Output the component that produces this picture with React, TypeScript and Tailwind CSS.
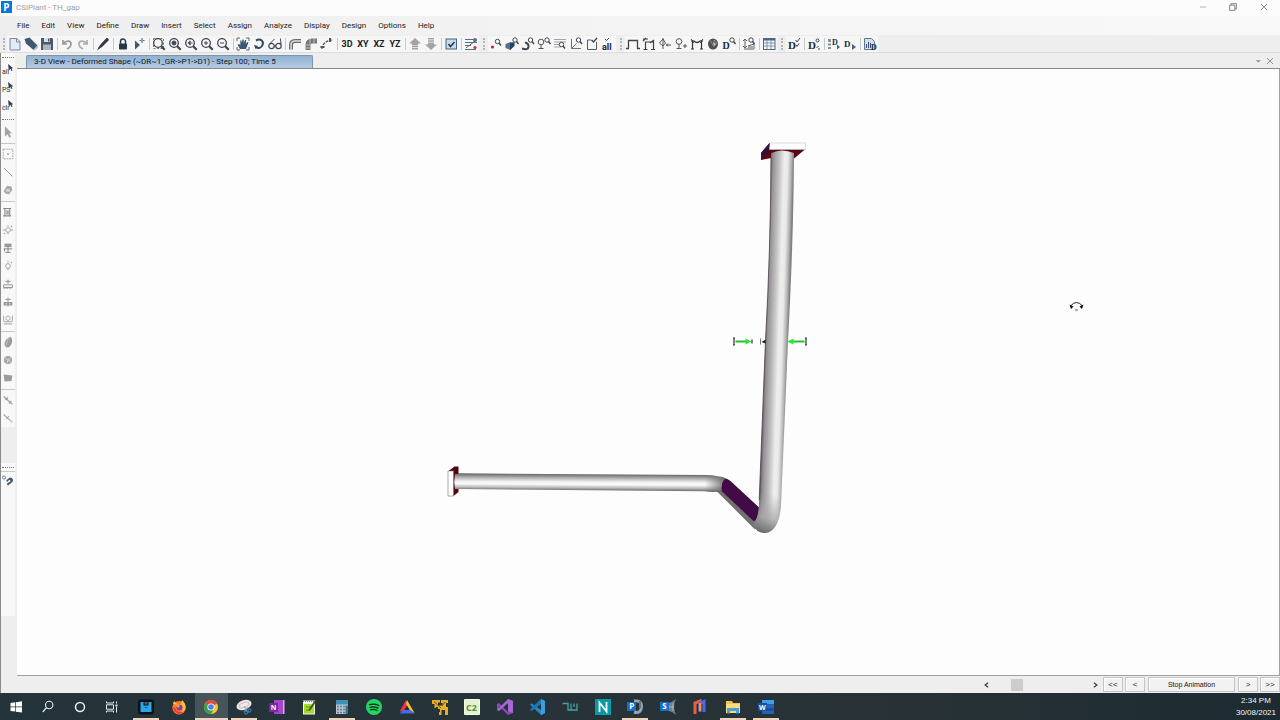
import React from "react";

type Glyph = { label: string; art: React.ReactNode };

const Icon = ({ children, className = "size-4" }: { children: React.ReactNode; className?: string }) => (
  <svg viewBox="0 0 16 16" className={className} fill="none" aria-hidden="true">
    {children}
  </svg>
);

const ink = "#3f4650";
const steel = "#48637f";
const pale = "#9a9a9a";

const Lens = ({ x, y, r = 2.2 }: { x: number; y: number; r?: number }) => (
  <g stroke={ink} strokeWidth="1">
    <circle cx={x} cy={y} r={r} fill="#fff" />
    <path d={`M${x + r * 0.7} ${y + r * 0.7}l2 2.500`} strokeWidth="1.400" />
  </g>
);

const BigLens = ({ children }: { children?: React.ReactNode }) => (
  <g stroke={ink}>
    <circle cx="7" cy="7" r="4.300" strokeWidth="1.300" />
    <path d="M10.200 10.200l3.500 3.500" strokeWidth="2.200" />
    {children}
  </g>
);

const Serif = ({ x, y, s = 11 }: { x: number; y: number; s?: number }) => (
  <text x={x} y={y} fontSize={s} fontWeight="700" fill="#222c36" fontFamily="Liberation Serif, serif">D</text>
);

const g = (label: string, art: React.ReactNode): Glyph => ({ label, art });
const words = (t: string): Glyph => ({
  label: `${t} view`,
  art: <span className="font-[Roboto,sans-serif] text-[9px] leading-4 font-bold text-[#1c1c1c]">{t}</span>,
});

const fileTools: (Glyph | "sep")[] = [
  g("New model", <Icon><path d="M3 2.500h7l3 3v8.500H3z" fill="#e3ebf7" stroke="#7487a3" /><path d="M9.500 2.500v3.500h3.500" stroke="#7487a3" /></Icon>),
  g("Open", <Icon><path d="M1.500 3l5-1.500 8 8-4 4.500-7.500-6.500z" fill="#3e5871" /><path d="M10 14l4.500-4.500.5 2-3.500 3z" fill="#a9bdd0" /></Icon>),
  g("Save", <Icon><path d="M2 2h11l1 1v11H2z" fill="#4c5a68" /><path d="M5 2h6v4H5z" fill="#d6dde5" /><path d="M4 8.500h8V14H4z" fill="#aab6c2" /><path d="M9 2.500h1.500v3H9z" fill="#4c5a68" /></Icon>),
  "sep",
  g("Undo", <Icon><path d="M4 4v4h4M4.500 7.500C7 4 12 4.500 12 8c0 2.500-2 4-4 5" stroke={pale} strokeWidth="1.700" /></Icon>),
  g("Redo", <Icon><path d="M12 4v4H8M11.500 7.500C9 4 4 4.500 4 8c0 2.500 2 4 4 5" stroke="#adadad" strokeWidth="1.700" /></Icon>),
  "sep",
  g("Edit properties", <Icon><path d="M3 13l2-4 6-6.500c1-1 3.500 0 2.500 2L7 11z" fill="#303944" /><path d="M2 14.500l2-4 2 1z" fill="#303944" /></Icon>),
  "sep",
  g("Lock model", <Icon><path d="M5.500 8V5.500a2.500 2.500 0 015 0V8" stroke="#2c3b49" strokeWidth="1.500" /><rect x="4" y="7.500" width="8" height="6" rx="1" fill="#26384a" /></Icon>),
  g("Run analysis", <Icon><path d="M4 4.500v9l5-4.500z" fill="#3e5871" /><path d="M11 2v5M8.500 4.500h5" stroke={steel} /><circle cx="11" cy="4.500" r="1.300" fill="#8fa3b8" /></Icon>),
  "sep",
  g("Zoom window", <Icon><rect x="2.500" y="2.500" width="10" height="10" stroke="#778" strokeDasharray="2 1.500" /><BigLens /></Icon>),
  g("Zoom full", <Icon><BigLens><circle cx="7" cy="7" r="2" fill="#33506c" /></BigLens></Icon>),
  g("Zoom previous", <Icon><BigLens><path d="M9.500 7h-4m2-2l-2 2 2 2" strokeWidth="1.200" /></BigLens></Icon>),
  g("Zoom in", <Icon><BigLens><path d="M7 5v4M5 7h4" /></BigLens></Icon>),
  g("Zoom out", <Icon><BigLens><path d="M5 7h4" /></BigLens></Icon>),
  "sep",
  g("Pan", <Icon><path d="M2 5V2h3M11 2h3v3M14 11v3h-3M5 14H2v-3" stroke="#566" /><path d="M5 13L2.500 8.500 4 8l1.300 1.200V4.500h1.200V7L7.500 3.500h1.200V7L10 4h1.200l-.4 4 1.500-2 1.200.5-2.500 6.500z" fill="#3c5871" /></Icon>),
  g("Rotate view", <Icon><path d="M5 4.500c5-2.500 8 1 6.500 4.500C10.500 12 7 13 5 11" stroke="#34485d" strokeWidth="2" /><path d="M3 9l4 1-2.500 3z" fill="#34485d" /></Icon>),
  g("Perspective", <Icon><circle cx="4.500" cy="10" r="2.700" stroke={ink} strokeWidth="1.200" /><circle cx="11.500" cy="10" r="2.700" stroke={ink} strokeWidth="1.200" /><path d="M7 10h2M2.500 8l5-5M14 8l-.5-5.500" stroke={ink} /></Icon>),
  "sep",
  g("Line pipes", <Icon><path d="M4 13.500V9q0-4 4-4h6" stroke="#6c6c6c" strokeWidth="4" /><path d="M4 14V9q0-4 4-4h6" stroke="#ddd" strokeWidth="1.500" /></Icon>),
  g("Extruded pipes", <Icon><path d="M5 14V9q0-4 4-4h5" stroke="#777" strokeWidth="5" /><path d="M2 9h6M2 12h6M7 3v5M11 2v6" stroke="#c4c4c4" /></Icon>),
  g("Centrelines", <Icon><path d="M3 13q1-8 10-9" stroke="#555" strokeWidth="1.200" strokeDasharray="3 1" /><path d="M1.500 11h4M11 2v4" stroke="#555" strokeWidth="2" /></Icon>),
  "sep",
  words("3D"), words("XY"), words("XZ"), words("YZ"),
  "sep",
  g("Move up", <Icon><path d="M8 2l6 5.500h-3v2H5v-2H2zM5 10h6v1.300H5zM5 12h6v1.500H5z" fill="#a3a3a3" /></Icon>),
  g("Move down", <Icon><path d="M8 14l6-5.500h-3v-2H5v2H2zM5 2h6v1.500H5zM5 4.300h6v1.400H5z" fill="#a3a3a3" /></Icon>),
  "sep",
  g("Display options", <Icon><rect x="3" y="3" width="10.500" height="10" fill="#c8daea" stroke="#46627e" /><path d="M5.500 8l2 2.500L11.500 6" stroke="#233d57" strokeWidth="1.600" /></Icon>),
  "sep",
  g("Show model", <Icon><path d="M2 3.500h12M2 6.500h12M3 12l9-7M2 13.500h11M2 9.500h6" stroke="#566b80" /><circle cx="12" cy="4" r="2" fill="#59728b" /><circle cx="12" cy="11.500" r="1.600" fill="#d22d48" /></Icon>),
];

const selectTools: (Glyph | "sep")[] = [
  g("Find point", <Icon><circle cx="4.500" cy="11" r="1.600" fill="#ce1e38" /><Lens x={9.5} y={5.5} /></Icon>),
  g("Find element", <Icon><path d="M1.500 8l5-2 4 2-4 6-5-2z" fill="#52718f" /><path d="M6 7l4.500-1v4L6 14z" fill="#27435e" /><Lens x={11} y={4} /></Icon>),
  g("Find pipe", <Icon><path d="M2 12.500q6 2 6.500-1.500T5 6.500" stroke={ink} strokeWidth="2" /><Lens x={10.5} y={4} /></Icon>),
  g("Find support", <Icon><circle cx="5" cy="6" r="2.800" stroke="#555" /><path d="M5 9v3M2.500 12.500h5" stroke="#555" /><Lens x={11} y={4} /></Icon>),
  g("Find in list", <Icon><path d="M2 3.500h12M2 6h12M2 8.500h8M2 11h7" stroke="#9aa5b0" /><Lens x={9.5} y={8.5} /></Icon>),
  g("Find direction", <Icon><path d="M3.500 3v9.500H13M3.500 12.500l5-5" stroke="#68727c" /><Lens x={10.5} y={4} /></Icon>),
  g("Select clipboard", <Icon><path d="M7 4H3.500v9.500h9V6" stroke="#555e68" /><path d="M7.500 4l2 2L13 2" stroke={ink} strokeWidth="1.400" /></Icon>),
  g("Select all", <Icon><path d="M5 3l1.500 1.500L9 2" stroke={ink} /><text x="2" y="13.500" fontSize="9" fontWeight="700" fill="#222" fontFamily="Roboto, sans-serif">all</text></Icon>),
];

const assignTools: (Glyph | "sep")[] = [
  g("Frame", <Icon><path d="M1 12.500h3M12 12.500h3M3.500 12.500v-8h9v8" stroke="#444" strokeWidth="1.300" /></Icon>),
  g("Frame loads", <Icon><path d="M2 3h5M4.500 13V6h8M12.500 13V5M10 13.500h4M2.500 13.500h4M2 5l3-3M9 7l4-3" stroke="#3e3e3e" strokeWidth="1.200" /></Icon>),
  g("Anchor", <Icon><path d="M6 2v11M2.500 7L6 3l2.500 4L6 10zM9 9h5M11 7.500L9.500 9l1.500 1.500" stroke="#555" /></Icon>),
  g("Hanger", <Icon><circle cx="6" cy="5.500" r="2.800" stroke="#555" /><path d="M6 8v4M3.500 12.500h5M10 10h4M12 8v4" stroke="#555" /></Icon>),
  g("Deformed shape", <Icon><path d="M3.500 4v9M12.500 4v9M2 5h3q3 3 6 0h3M2 13h3M11 13h3" stroke="#333" strokeWidth="1.200" /><path d="M2 3l3 4M14 3l-3 4" stroke="#444" /></Icon>),
  g("Stress contours", <Icon><ellipse cx="8" cy="8" rx="5" ry="5.500" fill="#505050" /><path d="M5 4l4 7M9 4q5 3 0 6z" stroke="#888" /><path d="M8 6l3 2-2 2z" fill="#c4c4c4" /></Icon>),
  g("Find design", <Icon><Serif x={1.5} y={13} s={10} /><Lens x={11} y={4} /></Icon>),
  "sep",
  g("Find response", <Icon><path d="M4 3v9M2 5l2-2 2 2M2 10l2 2 2-2M7 10l6-2v5H3" stroke="#59626b" /><path d="M7 10h6v4H7z" fill="#a2a9af" /><Lens x={10} y={4} /></Icon>),
  "sep",
  g("Tables", <Icon><rect x="2.500" y="2.500" width="11.500" height="11" fill="#f4f8fc" stroke="#4b6782" /><path d="M2.500 3.500h11.500" stroke="#4b6782" strokeWidth="2" /><path d="M2.500 7h11.500M2.500 10h11.500M6 4v9M10 4v9" stroke="#8097ad" /></Icon>),
];

const designTools: (Glyph | "sep")[] = [
  g("Run design", <Icon><Serif x={2} y={13} /><path d="M9.500 4l1.500 2 3-4M10 9l1 1.500 2-3" stroke={ink} /></Icon>),
  "sep",
  g("Design settings", <Icon><Serif x={2} y={13} /><circle cx="11.500" cy="4.500" r="1.500" stroke={ink} /><path d="M10.500 12l2-2M12 13h2" stroke={ink} /></Icon>),
  "sep",
  g("Run design set", <Icon><path d="M2 3h3v3H2zM2 7.500h3v2H2zM2 11h3v2H2z" fill="#8494a4" /><Serif x={6} y={9} s={8} /><path d="M11 8.500v5l3-2.500z" fill={steel} /></Icon>),
  g("Start design", <Icon><Serif x={2} y={11} s={9} /><path d="M10 8v6l4-3z" fill={steel} /></Icon>),
  "sep",
  g("Design report", <Icon><path d="M2.500 2.500h7l3 3v8h-10z" fill="#d3deea" stroke="#5f7890" /><path d="M4.500 12V8M6.500 12V6M8.500 12V7" stroke="#34506b" /><Serif x={9} y={14} s={8} /></Icon>),
];

const Dot = ({ x, y }: { x: number; y: number }) => <circle cx={x} cy={y} r="0.9" fill={pale} />;
const pick = (t: string) => (
  <Icon>
    <path d="M8 1l6 5-2 .3 1.200 2.200-1.200.7-1.300-2.500L9 8.500z" fill="#333d48" />
    <text x="1" y="13" fontSize="8" fill="#333" fontFamily="Roboto, sans-serif">{t}</text>
  </Icon>
);
const spring = (extra: React.ReactNode) => (
  <Icon><circle cx="8" cy="8" r="2.700" stroke={pale} /><path d="M8 2v3M8 11v3" stroke={pale} strokeDasharray="2 1" />{extra}</Icon>
);

const pickTools: Glyph[] = [g("Select all objects", pick("all")), g("Previous selection", pick("PS")), g("Clear selection", pick("clr"))];

const drawGroups: Glyph[][] = [
  [g("Pointer", <Icon><path d="M4.500 1.500l8 8H9.500l2 4-2 1-2-4-3 2.500z" fill="#a3a3a3" /></Icon>)],
  [
    g("Draw point", <Icon><rect x="2.500" y="2.500" width="11" height="11" stroke={pale} strokeDasharray="2 1" /><circle cx="8" cy="8" r="1" fill="#888" /></Icon>),
    g("Draw line", <Icon><path d="M3.500 3.500l9.500 9.500" stroke="#888" /></Icon>),
    g("Draw bend", <Icon><path d="M3 9l4-6 5 1 1 4-4 5-4-1z" fill="#aaa" /><path d="M6 7h4v3H6z" fill="#d5d5d5" /></Icon>),
  ],
  [
    g("Draw anchor", <Icon><path d="M2.500 4h9M4.500 4v8M10 4v8M2.500 12.500h9" stroke="#888" strokeWidth="1.300" /><path d="M6 6h3v5H6z" fill="#aaa" /></Icon>),
    g("Draw restraint", spring(<><path d="M2 8h3M11 8h3" stroke={pale} /><Dot x={12} y={4} /><Dot x={4} y={12} /></>)),
    g("Draw guide", <Icon><path d="M4 3h8v4H4z" fill="#999" /><path d="M3 9h10M8 7v6M5 13h6M4 9v3" stroke="#777" /></Icon>),
    g("Draw spring", spring(<Dot x={12} y={4} />)),
    g("Draw rest", <Icon><path d="M8 3v5M5 5h6M3 9h10v3H3z" stroke="#888" /><path d="M3 13h10" stroke="#888" strokeDasharray="1 1" /></Icon>),
    g("Draw hanger", <Icon><path d="M8 3v10M5 5h6" stroke="#888" /><path d="M3 8h10v4H3z" fill="#999" /><path d="M6 9v2M10 9v2" stroke="#eee" /></Icon>),
    g("Draw snubber", <Icon><path d="M3 3v6M13 3v6M3 12.500h10M3 10h10" stroke="#999" /><circle cx="8" cy="6" r="2.500" stroke="#aaa" /></Icon>),
  ],
  [
    g("Draw valve", <Icon><path d="M11 2q3 3 1 8t-6 4q-3-2-1.500-6T11 2z" fill="#9c9c9c" /><path d="M9 4q-3 4-3 8" stroke="#c8c8c8" /></Icon>),
    g("Draw flange", <Icon><circle cx="8" cy="8" r="4.700" fill="#a5a5a5" /><path d="M5 6l3 2 3-3M7 11l1-3 3 2" stroke="#ddd" /></Icon>),
    g("Draw reducer", <Icon><path d="M3 4l10 1-1 6.500-8 .5z" fill="#9c9c9c" /></Icon>),
  ],
  [
    g("Draw tie", <Icon><path d="M3 4l10 9M5 8l3-3M9 12l3-3" stroke="#999" strokeWidth="1.300" /></Icon>),
    g("Draw link", <Icon><path d="M3 4l10 9M6 9l3-3" stroke="#aaa" strokeWidth="1.300" /></Icon>),
  ],
];

const Bar = ({ items, name }: { items: (Glyph | "sep")[]; name: string }) => (
  <div role="toolbar" aria-label={name} className="flex items-center bg-[#f6f6f6]">
    {items.map((it, i) =>
      it === "sep" ? (
        <span key={i} className="flex w-1 justify-center"><span className="h-3 w-px bg-[#c9c9c9]" /></span>
      ) : (
        <button key={i} type="button" aria-label={it.label} className="flex size-4 items-center justify-center hover:bg-[#d9e6f3]">
          {it.art}
        </button>
      )
    )}
  </div>
);

const Grip = () => (
  <span className="flex w-[9px] justify-center"><span className="h-3 border-l-2 border-dotted border-[#b5b5b5]" /></span>
);
const SideGrip = () => <div className="flex h-2 items-center"><div className="ml-px w-3 border-t border-dotted border-[#777]" /></div>;

const SideButton = ({ label, art }: Glyph) => (
  <button type="button" aria-label={label} className="flex h-[18px] w-[14px] items-center justify-center hover:bg-[#d9e6f3]">{art}</button>
);

const menus = ["File", "Edit", "View", "Define", "Draw", "Insert", "Select", "Assign", "Analyze", "Display", "Design", "Options", "Help"];

const Sans = ({ t, x, y, s, fill = "#fff" }: { t: string; x: number; y: number; s: number; fill?: string }) => (
  <text x={x} y={y} fontSize={s} fontWeight="700" fill={fill} fontFamily="Open Sans, sans-serif">{t}</text>
);

const systemTasks: Glyph[] = [
  g("Start", <Icon><path d="M2.500 4L7.300 3.300v4.300H2.500zM8 3.200l6-.9v5.300H8zM2.500 8.300h4.800v4.300L2.500 12zM8 8.300h6v5.300l-6-.9z" fill="#fff" /></Icon>),
  g("Search", <Icon><circle cx="9.200" cy="6" r="3.700" stroke="#e8ecee" strokeWidth="1.100" /><path d="M6.500 8.700L2.800 13" stroke="#e8ecee" strokeWidth="1.200" /></Icon>),
  g("Cortana", <Icon><circle cx="8" cy="8" r="4.500" stroke="#e8ecee" strokeWidth="1.500" /></Icon>),
  g("Task view", <Icon><path d="M2.500 2.500v1.500h7V2.500M2.500 13.500V12h7v1.500M2.500 5.800h7v4.400h-7zM12.500 2.500v2M12.500 8v5.500" stroke="#e8ecee" /><path d="M11.500 5.500h2v2h-2z" fill="#e8ecee" /></Icon>),
];

type Task = Glyph & { open?: boolean; active?: boolean };
const apps: Task[] = [
  { ...g("Package manager", <Icon><rect x="0" y="0.500" width="16" height="15" rx="3" fill="#0b1117" /><path d="M2.500 3h3v3.500h5V3h3v10h-11z" fill="#2aa7e8" /><path d="M6.500 3h3v2.500h-3z" fill="#4a6272" /><path d="M6.500 8h3l-1.500 1.500z" fill="#0b4c70" /></Icon>), open: true },
  g("Firefox", <Icon><circle cx="8" cy="8.700" r="6.700" fill="#ff7a26" /><path d="M2 5l1-3 3 3h4l1-4c5 4 5 11-1 13 3-4 2-8-2-8z" fill="#ffc53a" /><path d="M2 8c1 8 9 8 11 4-3 2-7 2-9-3z" fill="#ec3154" /><circle cx="8.500" cy="8.500" r="3" fill="#8a3cae" /><path d="M4 5q3 0 5 2L7 9z" fill="#ff9b26" /></Icon>),
  { ...g("Chrome", <Icon><circle cx="8" cy="8" r="7" fill="#f9c72b" /><path d="M8 8L1.900 4.500A7 7 0 0114.100 4.500z" fill="#e04b3d" /><path d="M8 8L1.900 4.500A7 7 0 008 15l3-5.300z" fill="#34a251" /><circle cx="8" cy="8" r="3.600" fill="#fff" /><circle cx="8" cy="8" r="2.800" fill="#4b85e8" /></Icon>), open: true, active: true },
  { ...g("Snipping tool", <Icon><ellipse cx="8" cy="6" rx="7.700" ry="4.700" transform="rotate(-20 8 6)" fill="#f1e8e8" /><ellipse cx="8" cy="6" rx="5" ry="2.300" transform="rotate(-20 8 6)" stroke="#d3bcbc" /><path d="M8 7l4 7M12 8l-4 5" stroke="#9bb1bf" strokeWidth="1.200" /><circle cx="13.500" cy="11.500" r="1.500" stroke="#36749f" strokeWidth="1.300" /><circle cx="10" cy="13.500" r="1.500" stroke="#36749f" strokeWidth="1.300" /></Icon>), open: true },
  g("OneNote", <Icon><path d="M5 1h9v14H5z" fill="#a646ca" /><path d="M14 1h1.500v14H14z" fill="#e3a4f5" /><path d="M0 4h9v9H0z" fill="#7b23a0" /><Sans t="N" x={1.7} y={11} s={7} /></Icon>),
  g("Notepad++", <Icon><path d="M2 1.500h12v14H2z" fill="#f4f6ec" /><path d="M3 5h10v9.500H3z" fill="#a2d92a" /><path d="M2 2.500h12" stroke="#78836b" strokeDasharray="1 1" /><path d="M5 8h5M5 11h4" stroke="#5d9020" /><path d="M15.500 2l-6 9-2 1 .5-2 6-9z" fill="#40531f" /></Icon>),
  { ...g("Calculator", <Icon><path d="M2 1h12v14H2z" fill="#bac5ce" /><path d="M2 1h12v4.500H2z" fill="#3c92bb" /><path d="M3 7.500h8M3 10.500h8M3 13.500h8" stroke="#637f91" strokeWidth="1.500" strokeDasharray="2 1" /><path d="M11.500 6.500h2.500V15h-2.500z" fill="#31739a" /></Icon>), open: true },
  g("Spotify", <Icon><circle cx="8" cy="8" r="8" fill="#1ed760" /><path d="M3.500 5.700q5-1.500 9.300.8M4 8.300q4-1.200 8 .8M4.500 10.800q3.500-1 6.500.7" stroke="#142019" strokeWidth="1.300" strokeLinecap="round" /></Icon>),
  g("3D modeler", <Icon><path d="M7 1L.5 12.500 5 12l4-6z" fill="#e8334a" /><path d="M8 1l7.500 13L11 12 7 5z" fill="#f4c430" /><path d="M.5 14.500h15L11.500 11H4z" fill="#3d6fe8" /><path d="M8 6.500l2.500 4.500h-5z" fill="#32243c" /></Icon>),
  g("Section cut", <Icon><path d="M0 1h8v2.500H6v3h4.500V4H9V1h7v3h-2v4h2v8h-3v-5H9.500v5H7v-3h1v-3H6V8H4.500L2.500 9.500V5H0z" fill="#e6ae22" /><path d="M2 2.500l7 6.500M13 3l-3 4" stroke="#695219" /></Icon>),
  g("C2", <Icon><rect width="16" height="16" rx="1" fill="#f4faec" /><rect x="1" y="1" width="14" height="14" fill="#e4f3cf" /><Sans t="C2" x={2} y={11.5} s={9} fill="#5d8d35" /></Icon>),
  g("Visual Studio", <Icon><path d="M11 0l5 2v12l-5 2-9-9v5l-2-1V5l2-1 9 9z" fill="#8a4bb5" /><path d="M0 11l2 1 9-8v8l5 2V2l-5-2L2 9z" fill="#a66ad0" /><path d="M11 5v6L7 8z" fill="#33264a" /></Icon>),
  g("VS Code", <Icon><path d="M12 0l4 2v12l-4 2L1 5.500l1.500-1.300L12 11z" fill="#2489ca" /><path d="M12 0v5L2.500 12 1 10.500z" fill="#1a78b5" /><path d="M12 0l4 2v12l-4 2z" fill="#3aa0e3" /></Icon>),
  g("Pipe tools", <Icon><path d="M.5 4.500H6V11M9 4.500V11H5.500M9 11h6V4.500M12 4.500V8" stroke="#45a3a0" strokeWidth="1.300" /></Icon>),
  g("Navisworks", <Icon><path d="M0 0h16v16H0z" fill="#079ba3" /><path d="M4.500 13V3.500l7 9V3" stroke="#fff" strokeWidth="1.800" /></Icon>),
  { ...g("CSiPlant", <Icon><path d="M7 2q8-1 7.500 6T7 13" stroke="#93a4b2" strokeWidth="3" /><path d="M13 2v7" stroke="#5d7485" strokeWidth="2" /><path d="M0 3h9v9H0z" fill="#126fcb" /><Sans t="P" x={2.3} y={10.3} s={8} /></Icon>), open: true },
  g("SAP2000", <Icon><path d="M6 4q4 1 10-4-4 8 0 16-6-5-10-4z" fill="#6b8294" /><path d="M13 4v8M8 8h6" stroke="#aab8c1" /><path d="M0 3h9v9H0z" fill="#126fcb" /><Sans t="S" x={2.3} y={10.3} s={8} /></Icon>),
  g("Mathcad", <Icon><path d="M3 15V4l5-2v9" stroke="#e8603c" strokeWidth="3" /><path d="M8 13V4l4-1.500V13" stroke="#5067e8" strokeWidth="3" /><path d="M8 4v8" stroke="#f3944b" strokeWidth="2" /></Icon>),
  { ...g("File explorer", <Icon><path d="M1 2h6l1 2h7v10H1z" fill="#f2c44e" /><path d="M1 5h14v9H1z" fill="#ffdc79" /><path d="M2 9h12v5.500h-3V12H5v2.500H2z" fill="#4a9fd8" /></Icon>), open: true },
  { ...g("Word", <Icon><path d="M4 1h12v14H4z" fill="#2563b8" /><path d="M4 1h12v4H4z" fill="#3d9df0" /><path d="M4 9h12v3H4z" fill="#194f9c" /><path d="M0 4h9v8H0z" fill="#174fa3" /><Sans t="W" x={1} y={10.5} s={7} /></Icon>), open: true },
];

const PipeModel = () => (
  <svg viewBox="17 69 1261 606" className="size-full" role="img" aria-label="Deformed pipe shape">
    <defs>
      <linearGradient id="riser" gradientUnits="userSpaceOnUse" x1="770" y1="152" x2="793.5" y2="152.750">
        <stop offset="0" stopColor="#605860" />
        <stop offset="0.12" stopColor="#949194" />
        <stop offset="0.4" stopColor="#c4c4c4" />
        <stop offset="0.6" stopColor="#eeeeee" />
        <stop offset="0.75" stopColor="#e9e9e9" />
        <stop offset="0.9" stopColor="#b4b4b4" />
        <stop offset="1" stopColor="#828282" />
      </linearGradient>
      <linearGradient id="run" gradientUnits="userSpaceOnUse" x1="600" y1="473.500" x2="599.900" y2="490.500">
        <stop offset="0" stopColor="#575757" />
        <stop offset="0.25" stopColor="#aaaaaa" />
        <stop offset="0.5" stopColor="#f1f1f1" />
        <stop offset="0.65" stopColor="#fafafa" />
        <stop offset="0.85" stopColor="#b8b8b8" />
        <stop offset="1" stopColor="#6c6c6c" />
      </linearGradient>
      <linearGradient id="bendShade" x1="0" x2="1">
        <stop offset="0" stopColor="#777" stopOpacity="0" />
        <stop offset="1" stopColor="#666" stopOpacity="0.9" />
      </linearGradient>
      <linearGradient id="elbow" gradientUnits="userSpaceOnUse" x1="772" y1="494" x2="763" y2="534">
        <stop offset="0" stopColor="#aaa" stopOpacity="0" />
        <stop offset="0.6" stopColor="#a9a9a9" stopOpacity="0.8" />
        <stop offset="1" stopColor="#666" />
      </linearGradient>
    </defs>

    <path d="M769 143L760.500 153v7L771 158l22 1L805 149z" fill="#5c0612" />
    <path d="M769 143L760.500 153v7l9-11z" fill="#35103a" />
    <path d="M769.500 143H805v6.500h-36z" fill="#fff" stroke="#c5c5c5" strokeWidth="0.600" />

    <path d="M715 477q7-2 13 3l31 28-1 20-4 1L716 491z" fill="#737074" />
    <path d="M720 480q5-3 10 1l28.500 26.500L757 520l-4 1-33-31q-4-5 0-10z" fill="#420b48" />
    <path d="M458 473.300L706 475q11 0 18 4-4 4-3 12-7 2-17 .3L458 489z" fill="url(#run)" />
    <path d="M704 475q12 0 20 4-4 4-3 12-7 2-17 .3z" fill="url(#bendShade)" />

    <path d="M448 471l6-4.500h4V492l-5 4h-5z" fill="#510610" />
    <path d="M447.500 471h5.500v25h-5.500z" fill="#fff" stroke="#777" strokeWidth="0.600" />
    <path d="M454.500 474h5v15h-5q-1.500-7 0-15z" fill="url(#run)" />

    <path d="M771 153q10-5 22.500 0-.3 84-6 188L780.500 505q-2 27-16 28-8 0-12.500-8.500 6-5 6.500-20L765 340Q770 250 770.500 153z" fill="url(#riser)" />
    <path d="M758.700 494h22.200L780.500 505q-2 27-16 28-8 0-12.500-8.500 6-5 6.500-20z" fill="url(#elbow)" />
    <path d="M770.500 158q-.5 95-5.500 182l-6.300 160" stroke="#4b4149" strokeWidth="0.800" fill="none" />

    <path d="M735 341.500h12M792 341.500h12" stroke="#27bf2f" strokeWidth="2" />
    <path d="M745 338.500l6 3-6 3zM793 338.500l-6.500 3 6.500 3z" fill="#2fe637" />
    <path d="M732.500 338h2M733.500 338v7M732.500 345h2M751.500 339.500v4M804.500 338h2M805.500 338v7M804.500 345h2" stroke="#283828" strokeWidth="1.200" />
    <path d="M760 338.500v6" stroke="#777" />
    <path d="M761 342l4-2.500v4z" fill="#202020" />

    <path d="M1070 306q6-7 12 0" fill="none" stroke="#222" strokeWidth="1" />
    <path d="M1069 304.500l4 2-2.500 2.500zM1083 304.500l-4 2 2.500 2.500z" fill="#111" />
    <circle cx="1076" cy="310" r="1.300" fill="#999" />
  </svg>
);

const stepButton = "h-[15px] w-5 border border-[#c4c4c4] bg-[#f2f2f2] text-center text-[8px] leading-[13px] text-[#222] shadow-[inset_1px_1px_0_#fff]";

export default function App() {
  return (
    <div className="flex h-screen min-h-[560px] flex-col overflow-hidden bg-[#eeeeee] font-[Roboto,'Noto_Sans',sans-serif] text-[8px] text-[#1c1c1c]">
      <header className="flex h-4 shrink-0 items-center bg-[#fcfcfc] pl-px">
        <svg viewBox="0 0 11 12" className="mb-[2px] h-3 w-[11px]" aria-hidden="true">
          <path d="M0 0h11v12H0z" fill="#0877d8" />
          <text x="2.300" y="9.500" fontSize="10" fontWeight="700" fill="#fff" fontFamily="Open Sans, sans-serif">P</text>
        </svg>
        <h1 className="ml-1 text-[8px] leading-4 text-[#a0a0a0]">CSiPlant - TH_gap</h1>
        <div className="ml-auto flex pb-[2px] text-[#999]">
          <button type="button" aria-label="Minimize" className="flex w-[30px] items-center justify-center"><Icon className="size-3"><path d="M4 8h8" stroke="currentColor" /></Icon></button>
          <button type="button" aria-label="Restore" className="flex w-[30px] items-center justify-center"><Icon className="size-3"><path d="M3.500 5.500h7v7h-7zM5.500 5.500v-2h7v7h-2" stroke="#777" strokeWidth="1.200" /></Icon></button>
          <button type="button" aria-label="Close" className="flex w-8 items-center justify-center"><Icon className="size-3"><path d="M4 4l8 8M12 4l-8 8" stroke="#888" strokeWidth="1.200" /></Icon></button>
        </div>
      </header>

      <nav aria-label="Main menu" className="flex h-[19px] shrink-0 items-center gap-3 bg-linear-to-r from-[#eeeeee] to-[#f9f9f9] pl-[17px]">
        {menus.map((m) => (
          <button key={m} type="button" className="leading-4 hover:bg-[#d9e6f3]">{m}</button>
        ))}
      </nav>

      <div className="flex h-[18px] shrink-0 items-center border-b border-[#dcdcdc]">
        <span className="flex w-[7px] justify-center"><span className="h-3 border-l-2 border-dotted border-[#b5b5b5]" /></span>
        <Bar items={fileTools} name="File and view" />
        <Grip />
        <Bar items={selectTools} name="Select" />
        <Grip />
        <Bar items={assignTools} name="Assign and display" />
        <Grip />
        <Bar items={designTools} name="Design" />
      </div>

      <div className="flex min-h-0 flex-1">
        <aside aria-label="Draw tools" className="flex w-[17px] shrink-0 flex-col border-l border-[#8a8a8a]">
          <div className="w-[14px] bg-[#f8f8f8]">
            <SideGrip />
            {pickTools.map((t) => <SideButton key={t.label} {...t} />)}
            <SideGrip />
            {drawGroups.map((group, i) => (
              <div key={i}>
                {i > 0 && <div className="flex h-1 items-center"><div className="h-px w-full bg-[#c8c8c8]" /></div>}
                {group.map((t) => <SideButton key={t.label} {...t} />)}
              </div>
            ))}
          </div>
          <div className="mt-9 w-[14px] bg-[#f8f8f8]">
            <SideGrip />
            <div className="h-px bg-[#c8c8c8]" />
            <SideButton label="Snap" art={<Icon><circle cx="3.500" cy="4" r="1.800" stroke="#56708a" /><path d="M6 7l4-3c4 0 5 4 2 6l-4 3-1.500-2 4-2.500q1-2-1-2L7 9z" fill="#3f5972" /></Icon>} />
          </div>
          <div className="h-[126px] w-[14px] bg-[#f8f8f8]" />
        </aside>

        <main className="flex min-w-0 flex-1 flex-col">
          <div className="flex h-4 shrink-0 items-end border-b border-[#888] pl-[9px]">
            <button type="button" className="h-[13px] w-[287px] rounded-t-xs border border-b-0 border-[#7e95ae] bg-linear-to-b from-[#92b0d0] to-[#b4cce5] pb-px pl-[7px] text-left leading-[11px] whitespace-nowrap text-[#101820]">
              3-D View - Deformed Shape (~DR~1_GR-&gt;P1-&gt;D1) - Step 100; Time 5
            </button>
            <div className="ml-auto flex h-full items-center pr-1">
              <button type="button" aria-label="Window list" className="flex size-3 items-center justify-center"><Icon className="size-3"><path d="M5 7h7l-3.500 3z" fill="#888" /></Icon></button>
              <button type="button" aria-label="Close view" className="flex size-3 items-center justify-center"><Icon className="size-3"><path d="M4 4l8 8M12 4l-8 8" stroke="#888" strokeWidth="1.200" /></Icon></button>
            </div>
          </div>
          <div className="min-h-0 flex-1 border-r border-b border-[#a0a0a0] bg-[#fdfdfd]">
            <PipeModel />
          </div>
          <div className="flex h-[17px] shrink-0 items-center justify-end">
            <button type="button" aria-label="Step left" className="w-3"><Icon className="size-3"><path d="M9.500 5l-4 3 4 3" stroke="#333" strokeWidth="1.500" /></Icon></button>
            <input
              type="range"
              aria-label="Animation step"
              defaultValue={21}
              className="mx-px h-3 w-[94px] appearance-none bg-transparent [&::-webkit-slider-thumb]:h-3 [&::-webkit-slider-thumb]:w-3 [&::-webkit-slider-thumb]:appearance-none [&::-webkit-slider-thumb]:bg-[#cccccc]"
            />
            <button type="button" aria-label="Step right" className="mr-[2px] w-3"><Icon className="size-3"><path d="M6.500 5l4 3-4 3" stroke="#333" strokeWidth="1.500" /></Icon></button>
            <div className="flex gap-[2px] font-['Liberation_Sans',sans-serif]">
              <button type="button" className={stepButton}>&lt;&lt;</button>
              <button type="button" className={stepButton}>&lt;</button>
              <button type="button" className="mx-px h-[15px] w-[87px] border border-[#c4c4c4] bg-[#f2f2f2] text-[7px] leading-[13px] text-[#111] shadow-[inset_1px_1px_0_#fff]">Stop Animation</button>
              <button type="button" className={stepButton}>&gt;</button>
              <button type="button" className={stepButton}>&gt;&gt;</button>
            </div>
          </div>
        </main>
      </div>

      <footer className="flex h-[27px] shrink-0 items-stretch bg-linear-to-r from-[#24343b] via-[#283236] via-70% to-[#1c2b32]">
        <div className="flex">
          {systemTasks.map((t) => (
            <button key={t.label} type="button" aria-label={t.label} className="flex w-8 items-center justify-center">{t.art}</button>
          ))}
        </div>
        <div className="ml-[2px] grid w-[652px] grid-cols-20">
          {apps.map((t) => (
            <button
              key={t.label}
              type="button"
              aria-label={t.label}
              className={t.active ? "flex flex-col items-center bg-[#475459]" : "flex flex-col items-center"}
            >
              <span className="flex flex-1 items-center">{t.art}</span>
              {t.open && <span className={t.active ? "-mt-[2px] h-[2px] w-full bg-[#efd3bf]" : "-mt-[2px] h-[2px] w-[26px] bg-[#efd3bf]"} />}
            </button>
          ))}
        </div>
        <div className="ml-auto flex flex-col justify-center pr-1 text-center font-['Liberation_Sans',sans-serif] leading-3 text-[#f2f2f2]">
          <time>2:34 PM</time>
          <time>30/08/2021</time>
        </div>
      </footer>
    </div>
  );
}
